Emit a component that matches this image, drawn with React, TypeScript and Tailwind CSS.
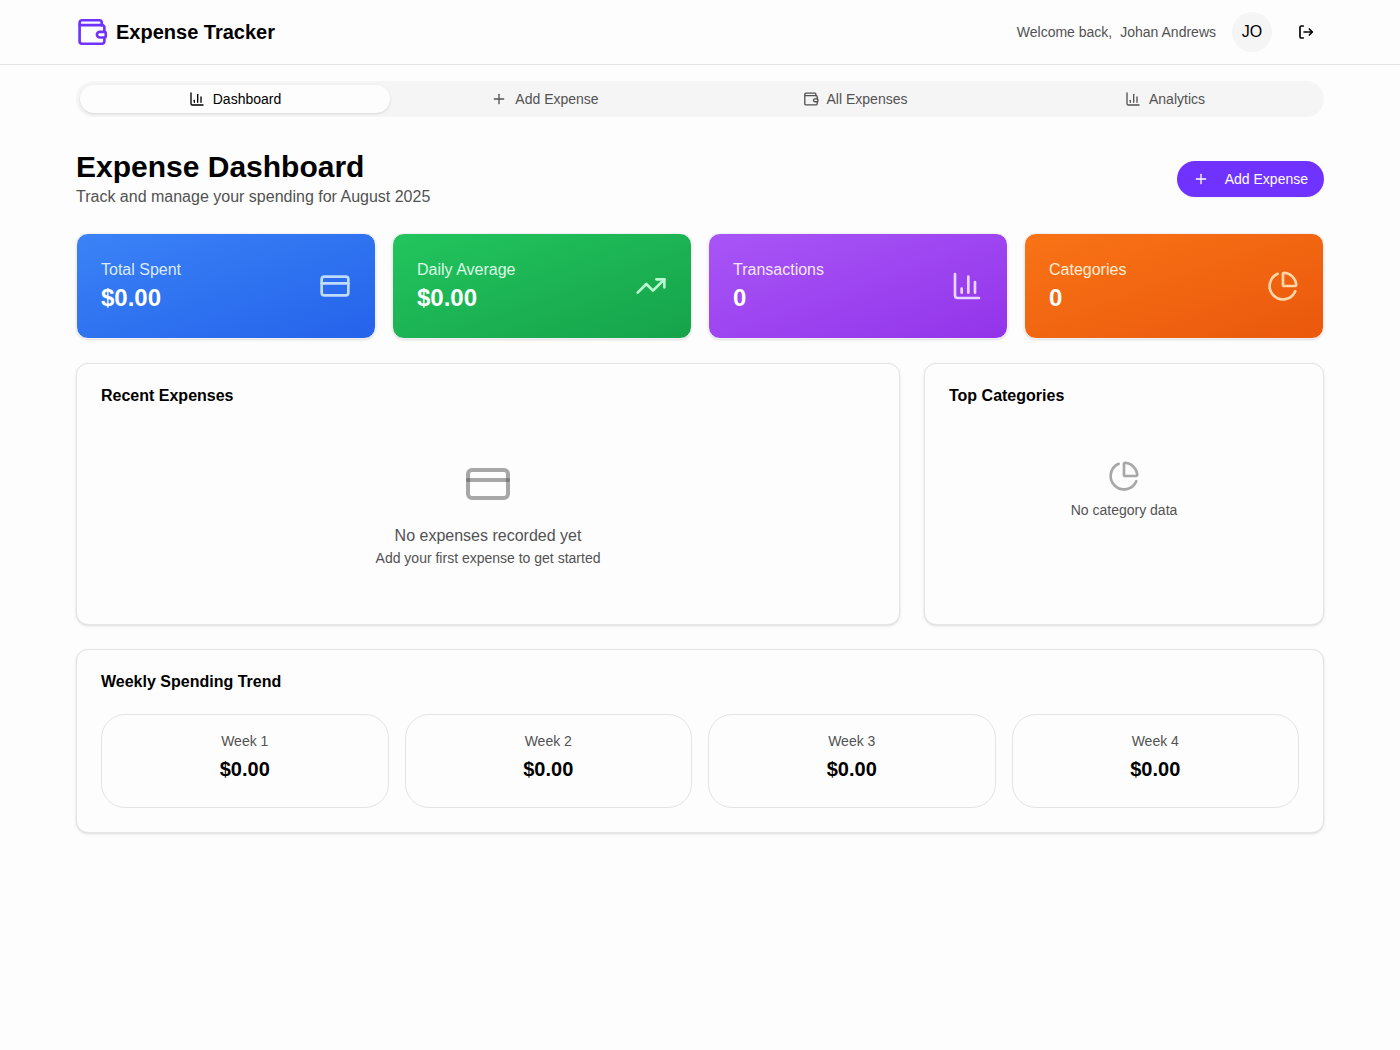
import React from 'react';
import { ChartColumn, ChartPie, CreditCard, Plus, TrendingUp } from 'lucide-react';

const tabs = [
  { label: 'Dashboard', icon: ChartColumn },
  { label: 'Add Expense', icon: Plus },
  { label: 'All Expenses', icon: WalletIcon },
  { label: 'Analytics', icon: ChartColumn },
];

const stats = [
  { label: 'Total Spent', value: '$0.00', icon: CreditCard, card: 'from-[#3b82f6] to-[#2563eb]', tint: 'text-[#dbeafe]', iconTint: 'text-[#bfdbfe]' },
  { label: 'Daily Average', value: '$0.00', icon: TrendingUp, card: 'from-[#22c55e] to-[#16a34a]', tint: 'text-[#dcfce7]', iconTint: 'text-[#bbf7d0]' },
  { label: 'Transactions', value: '0', icon: ChartColumn, card: 'from-[#a855f7] to-[#9333ea]', tint: 'text-[#f3e8ff]', iconTint: 'text-[#e9d5ff]' },
  { label: 'Categories', value: '0', icon: ChartPie, card: 'from-[#f97316] to-[#ea580c]', tint: 'text-[#ffedd5]', iconTint: 'text-[#fed7aa]' },
];

const weeks = [
  { label: 'Week 1', total: '$0.00' },
  { label: 'Week 2', total: '$0.00' },
  { label: 'Week 3', total: '$0.00' },
  { label: 'Week 4', total: '$0.00' },
];

function WalletIcon({ className }: { className?: string }) {
  return (
    <svg viewBox="0 0 24 24" fill="none" stroke="currentColor" strokeWidth="2" strokeLinecap="round" strokeLinejoin="round" className={className} aria-hidden="true">
      <path d="M19.3 7V4.8a1.6 1.6 0 0 0-1.6-1.6H4.5A1.8 1.8 0 0 0 2.7 5v14a1.8 1.8 0 0 0 1.8 1.8h15a1.8 1.8 0 0 0 1.8-1.8v-2.8" />
      <path d="M2.9 6.9h16.8a1.6 1.6 0 0 1 1.6 1.6v3.2" />
      <path d="M17.8 11.9h3.6a.9.9 0 0 1 .9.9v2.4a.9.9 0 0 1-.9.9h-3.6a2.1 2.1 0 0 1 0-4.2Z" />
    </svg>
  );
}

function LogoutIcon({ className }: { className?: string }) {
  return (
    <svg viewBox="0 0 24 24" fill="none" stroke="currentColor" strokeWidth="2.5" strokeLinecap="round" strokeLinejoin="round" className={className} aria-hidden="true">
      <path d="M8 21H5a2 2 0 0 1-2-2V5a2 2 0 0 1 2-2h3" />
      <path d="M9 12h12" />
      <path d="m17 7.5 4.5 4.5-4.5 4.5" />
    </svg>
  );
}

function Panel({ title, className = '', children }: { title: string; className?: string; children: React.ReactNode }) {
  return (
    <section className={`rounded-xl border border-[#e4e4e7] bg-[#fdfdfd] p-6 shadow-sm ${className}`}>
      <h2 className="text-base leading-4 font-bold">{title}</h2>
      {children}
    </section>
  );
}

export default function App() {
  return (
    <div className="min-h-screen bg-[#fdfdfd] text-black font-['Liberation_Sans',Arial,sans-serif]">
      <header className="border-b border-[#e4e4e7]">
        <div className="mx-auto flex h-16 max-w-7xl items-center justify-between px-4">
          <div className="flex items-center gap-2">
            <WalletIcon className="size-8 text-[#7033ff]" />
            <span className="text-xl font-bold">Expense Tracker</span>
          </div>
          <div className="flex items-center gap-4">
            <p className="hidden gap-2 text-sm text-[#525252] sm:flex">
              <span>Welcome back,</span>
              <span>Johan Andrews</span>
            </p>
            <div className="flex size-10 items-center justify-center rounded-full bg-[#f5f5f5]">JO</div>
            <button type="button" aria-label="Log out" className="flex h-8 w-9 items-center justify-center rounded-full">
              <LogoutIcon className="size-4" />
            </button>
          </div>
        </div>
      </header>

      <main className="mx-auto max-w-7xl px-4 pt-4 pb-8">
        <nav className="grid h-9 grid-cols-4 rounded-full bg-[#f5f5f5] p-1">
          {tabs.map((tab, index) => (
            <button
              key={tab.label}
              type="button"
              className={`flex items-center justify-center gap-2 rounded-full text-sm ${index === 0 ? 'bg-[#fdfdfd] text-black shadow' : 'text-[#525252]'}`}
            >
              <tab.icon className="size-4" />
              {tab.label}
            </button>
          ))}
        </nav>

        <div className="mt-8 flex items-center justify-between">
          <div>
            <h1 className="text-3xl font-bold">Expense Dashboard</h1>
            <p className="text-[#525252]">Track and manage your spending for August 2025</p>
          </div>
          <button type="button" className="flex h-9 items-center gap-4 rounded-full bg-[#7033ff] px-4 text-sm text-white shadow-xs">
            <Plus className="size-4" />
            Add Expense
          </button>
        </div>

        <div className="mt-6 grid grid-cols-1 gap-4 sm:grid-cols-2 lg:grid-cols-4">
          {stats.map((stat) => (
            <div key={stat.label} className={`flex items-center justify-between rounded-xl border border-[#f0f0f3] bg-linear-to-br p-6 shadow-sm ${stat.card}`}>
              <div>
                <p className={stat.tint}>{stat.label}</p>
                <p className="text-2xl font-bold text-white">{stat.value}</p>
              </div>
              <stat.icon className={`size-8 ${stat.iconTint}`} />
            </div>
          ))}
        </div>

        <div className="mt-6 grid grid-cols-1 gap-6 lg:grid-cols-3">
          <Panel title="Recent Expenses" className="lg:col-span-2">
            <div className="flex flex-col items-center pt-14 pb-8 text-[#525252]">
              {/* translucent stroke, so the stripe darkens where it crosses the outline */}
              <CreditCard className="size-12 text-[#525252]/50" />
              <p className="mt-4">No expenses recorded yet</p>
              <p className="text-sm">Add your first expense to get started</p>
            </div>
          </Panel>
          <Panel title="Top Categories">
            <div className="flex flex-col items-center pt-14 text-[#525252]">
              <ChartPie className="size-8 text-[#525252]/50" />
              <p className="mt-2 text-sm">No category data</p>
            </div>
          </Panel>
        </div>

        <Panel title="Weekly Spending Trend" className="mt-6">
          <div className="mt-6 grid grid-cols-2 gap-4 md:grid-cols-4">
            {weeks.map((week) => (
              <div key={week.label} className="rounded-3xl border border-[#e4e4e7] px-4 pt-4 pb-6 text-center">
                <p className="text-sm text-[#525252]">{week.label}</p>
                <p className="mt-1 text-xl font-bold">{week.total}</p>
              </div>
            ))}
          </div>
        </Panel>
      </main>
    </div>
  );
}
